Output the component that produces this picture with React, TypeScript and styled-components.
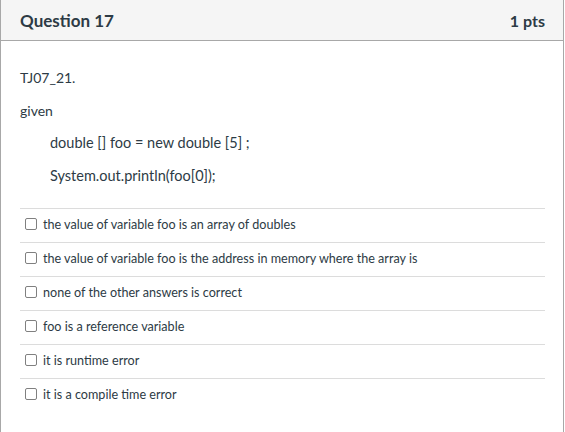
import React from 'react';
import { createGlobalStyle, styled } from 'styled-components';

const GlobalStyle = createGlobalStyle`
  html, body {
    margin: 0;
    padding: 0;
    background: #ffffff;
  }
  body {
    font-family: Lato, 'Open Sans', sans-serif;
    color: #2d3b45;
  }
`;

const answers = [
  'the value of variable foo is an array of doubles',
  'the value of variable foo is the address in memory where the array is',
  'none of the other answers is correct',
  'foo is a reference variable',
  'it is runtime error',
  'it is a compile time error',
];

export default function App() {
  return (
    <>
      <GlobalStyle />
      <Card>
        <Header>
          <Title>Question 17</Title>
          <Points>1 pts</Points>
        </Header>
        <Body>
          <Text $top={27}>TJ07_21.</Text>
          <Text $top={13}>given</Text>
          <Code $top={12}>double [] foo = new double [5] ;</Code>
          <Code $top={13}>System.out.println(foo[0]);</Code>
          <AnswerList>
            {answers.map((answer) => (
              <Answer key={answer}>
                <Checkbox type="checkbox" />
                <AnswerLabel>{answer}</AnswerLabel>
              </Answer>
            ))}
          </AnswerList>
        </Body>
      </Card>
    </>
  );
}

const Card = styled.div`
  width: 562px;
  height: 432px;
  border-left: 1px solid #a8a8a8;
  border-right: 1px solid #a8a8a8;
  box-sizing: content-box;
  overflow: hidden;
`;

const Header = styled.div`
  height: 40px;
  padding: 0 18px 0 19px;
  background-color: #f5f5f5;
  border-bottom: 1px solid #a8a8a8;
  display: flex;
  justify-content: space-between;
  align-items: center;
`;

const Title = styled.h3`
  margin: 0;
  font-size: 17px;
  font-weight: 700;
  color: #2d3b45;
`;

const Points = styled.span`
  font-size: 16px;
  font-weight: 700;
  color: #2d3b45;
`;

const Body = styled.div`
  padding: 0 18px 0 19px;
`;

const Text = styled.p<{ $top: number }>`
  margin: ${({ $top }) => $top}px 0 0;
  font-size: 14px;
  line-height: 20px;
`;

const Code = styled(Text)`
  padding-left: 30px;
  font-size: 14.5px;
`;

const AnswerList = styled.div`
  margin-top: 22px;
  display: flex;
  flex-direction: column;
`;

const Answer = styled.label`
  display: flex;
  align-items: center;
  gap: 6px;
  height: 30px;
  padding: 0 0 3px 5px;
  border-top: 1px solid #dcdcdc;
  font-size: 12.6px;
  color: #2d3b45;
`;

const Checkbox = styled.input`
  appearance: none;
  margin: 0;
  width: 12px;
  height: 12px;
  border: 1px solid #808080;
  border-radius: 2px;
  background: #fff;
  flex-shrink: 0;
`;

const AnswerLabel = styled.span`
  line-height: 17px;
`;
